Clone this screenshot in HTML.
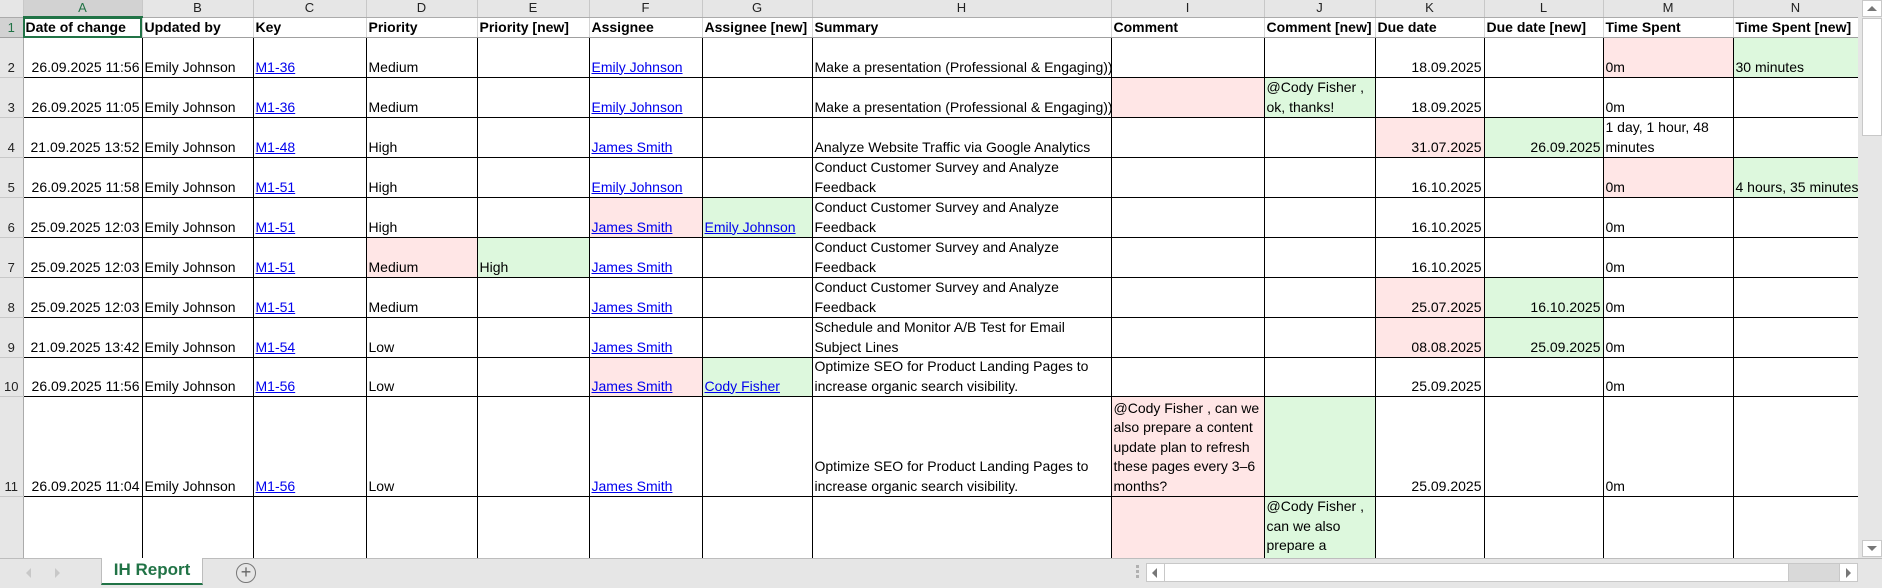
<!DOCTYPE html>
<html><head><meta charset="utf-8"><style>
*{margin:0;padding:0;box-sizing:border-box}
body{width:1882px;height:588px;overflow:hidden;background:#fff;font-family:"Liberation Sans",sans-serif;font-size:14px;color:#000;position:relative}
table{border-collapse:collapse;table-layout:fixed;position:absolute;left:0;top:0;width:1858px}
td{overflow:hidden;vertical-align:bottom;padding:0;border-right:1px solid #000;border-bottom:1px solid #000}
.c{display:flex;flex-direction:column;justify-content:flex-end;overflow:hidden;padding:0 2px;line-height:19.5px;white-space:nowrap;width:100%;max-width:100%}
.c.top{justify-content:flex-start}
tr.h40 .c{height:39px}
tr.h39 .c{height:38px}
tr.h100 .c{height:99px}
tr.h62 .c{height:61px}
tr.ch td{height:17px;background:#e6e6e6;text-align:center;border-right:1px solid #c8c8c8;border-bottom:1px solid #ababab;line-height:16px;padding:0;color:#222;vertical-align:middle;font-size:13px}
tr.ch td.sel{background:#d2d2d2;color:#217346;border-bottom:2px solid #217346}
td.rh{background:#e6e6e6;text-align:center;border-right:1px solid #ababab;border-bottom:1px solid #c8c8c8;color:#222;font-size:13px}
td.rh .c{align-items:center}
td.rhs{background:#d2d2d2;color:#217346;border-right:2px solid #217346}
tr.r1 td{font-weight:bold;border-right:1px solid #d4d4d4;border-bottom:1px solid #a0a0a0}
tr.r1 .c{height:19px;justify-content:center}
tr.r1 td.rh{font-weight:normal}
.r .c{align-items:flex-end}
.p{background:#ffe6e6}
.g{background:#ddf8dd}
a{color:#0000ee;text-decoration:underline}
</style></head><body>
<table>
<colgroup><col style="width:23px"><col style="width:119px"><col style="width:111px"><col style="width:113px"><col style="width:111px"><col style="width:112px"><col style="width:113px"><col style="width:110px"><col style="width:299px"><col style="width:153px"><col style="width:111px"><col style="width:109px"><col style="width:119px"><col style="width:130px"><col style="width:125px"></colgroup>
<tr class="ch"><td></td><td class="sel">A</td><td>B</td><td>C</td><td>D</td><td>E</td><td>F</td><td>G</td><td>H</td><td>I</td><td>J</td><td>K</td><td>L</td><td>M</td><td>N</td></tr>
<tr class="r1"><td class="rh rhs"><div class="c">1</div></td><td style="outline:2px solid #217346;outline-offset:-2px"><div class="c">Date of change</div></td><td><div class="c">Updated by</div></td><td><div class="c">Key</div></td><td><div class="c">Priority</div></td><td><div class="c">Priority [new]</div></td><td><div class="c">Assignee</div></td><td><div class="c">Assignee [new]</div></td><td><div class="c">Summary</div></td><td><div class="c">Comment</div></td><td><div class="c">Comment [new]</div></td><td><div class="c">Due date</div></td><td><div class="c">Due date [new]</div></td><td><div class="c">Time Spent</div></td><td><div class="c">Time Spent [new]</div></td></tr>
<tr class="h40"><td class="rh"><div class="c">2</div></td><td class="r"><div class="c">26.09.2025 11:56</div></td><td><div class="c">Emily Johnson</div></td><td><div class="c"><a>M1-36</a></div></td><td><div class="c">Medium</div></td><td><div class="c"></div></td><td><div class="c"><a>Emily Johnson</a></div></td><td><div class="c"></div></td><td><div class="c">Make a presentation (Professional &amp; Engaging))</div></td><td><div class="c"></div></td><td><div class="c"></div></td><td class="r"><div class="c">18.09.2025</div></td><td><div class="c"></div></td><td class="p"><div class="c">0m</div></td><td class="g"><div class="c">30 minutes</div></td></tr>
<tr class="h40"><td class="rh"><div class="c">3</div></td><td class="r"><div class="c">26.09.2025 11:05</div></td><td><div class="c">Emily Johnson</div></td><td><div class="c"><a>M1-36</a></div></td><td><div class="c">Medium</div></td><td><div class="c"></div></td><td><div class="c"><a>Emily Johnson</a></div></td><td><div class="c"></div></td><td><div class="c">Make a presentation (Professional &amp; Engaging))</div></td><td class="p"><div class="c"></div></td><td class="g"><div class="c">@Cody Fisher ,<br>ok, thanks!</div></td><td class="r"><div class="c">18.09.2025</div></td><td><div class="c"></div></td><td><div class="c">0m</div></td><td><div class="c"></div></td></tr>
<tr class="h40"><td class="rh"><div class="c">4</div></td><td class="r"><div class="c">21.09.2025 13:52</div></td><td><div class="c">Emily Johnson</div></td><td><div class="c"><a>M1-48</a></div></td><td><div class="c">High</div></td><td><div class="c"></div></td><td><div class="c"><a>James Smith</a></div></td><td><div class="c"></div></td><td><div class="c">Analyze Website Traffic via Google Analytics</div></td><td><div class="c"></div></td><td><div class="c"></div></td><td class="r p"><div class="c">31.07.2025</div></td><td class="r g"><div class="c">26.09.2025</div></td><td><div class="c">1 day, 1 hour, 48<br>minutes</div></td><td><div class="c"></div></td></tr>
<tr class="h40"><td class="rh"><div class="c">5</div></td><td class="r"><div class="c">26.09.2025 11:58</div></td><td><div class="c">Emily Johnson</div></td><td><div class="c"><a>M1-51</a></div></td><td><div class="c">High</div></td><td><div class="c"></div></td><td><div class="c"><a>Emily Johnson</a></div></td><td><div class="c"></div></td><td><div class="c">Conduct Customer Survey and Analyze<br>Feedback</div></td><td><div class="c"></div></td><td><div class="c"></div></td><td class="r"><div class="c">16.10.2025</div></td><td><div class="c"></div></td><td class="p"><div class="c">0m</div></td><td class="g"><div class="c">4 hours, 35 minutes</div></td></tr>
<tr class="h40"><td class="rh"><div class="c">6</div></td><td class="r"><div class="c">25.09.2025 12:03</div></td><td><div class="c">Emily Johnson</div></td><td><div class="c"><a>M1-51</a></div></td><td><div class="c">High</div></td><td><div class="c"></div></td><td class="p"><div class="c"><a>James Smith</a></div></td><td class="g"><div class="c"><a>Emily Johnson</a></div></td><td><div class="c">Conduct Customer Survey and Analyze<br>Feedback</div></td><td><div class="c"></div></td><td><div class="c"></div></td><td class="r"><div class="c">16.10.2025</div></td><td><div class="c"></div></td><td><div class="c">0m</div></td><td><div class="c"></div></td></tr>
<tr class="h40"><td class="rh"><div class="c">7</div></td><td class="r"><div class="c">25.09.2025 12:03</div></td><td><div class="c">Emily Johnson</div></td><td><div class="c"><a>M1-51</a></div></td><td class="p"><div class="c">Medium</div></td><td class="g"><div class="c">High</div></td><td><div class="c"><a>James Smith</a></div></td><td><div class="c"></div></td><td><div class="c">Conduct Customer Survey and Analyze<br>Feedback</div></td><td><div class="c"></div></td><td><div class="c"></div></td><td class="r"><div class="c">16.10.2025</div></td><td><div class="c"></div></td><td><div class="c">0m</div></td><td><div class="c"></div></td></tr>
<tr class="h40"><td class="rh"><div class="c">8</div></td><td class="r"><div class="c">25.09.2025 12:03</div></td><td><div class="c">Emily Johnson</div></td><td><div class="c"><a>M1-51</a></div></td><td><div class="c">Medium</div></td><td><div class="c"></div></td><td><div class="c"><a>James Smith</a></div></td><td><div class="c"></div></td><td><div class="c">Conduct Customer Survey and Analyze<br>Feedback</div></td><td><div class="c"></div></td><td><div class="c"></div></td><td class="r p"><div class="c">25.07.2025</div></td><td class="r g"><div class="c">16.10.2025</div></td><td><div class="c">0m</div></td><td><div class="c"></div></td></tr>
<tr class="h40"><td class="rh"><div class="c">9</div></td><td class="r"><div class="c">21.09.2025 13:42</div></td><td><div class="c">Emily Johnson</div></td><td><div class="c"><a>M1-54</a></div></td><td><div class="c">Low</div></td><td><div class="c"></div></td><td><div class="c"><a>James Smith</a></div></td><td><div class="c"></div></td><td><div class="c">Schedule and Monitor A/B Test for Email<br>Subject Lines</div></td><td><div class="c"></div></td><td><div class="c"></div></td><td class="r p"><div class="c">08.08.2025</div></td><td class="r g"><div class="c">25.09.2025</div></td><td><div class="c">0m</div></td><td><div class="c"></div></td></tr>
<tr class="h39"><td class="rh"><div class="c">10</div></td><td class="r"><div class="c">26.09.2025 11:56</div></td><td><div class="c">Emily Johnson</div></td><td><div class="c"><a>M1-56</a></div></td><td><div class="c">Low</div></td><td><div class="c"></div></td><td class="p"><div class="c"><a>James Smith</a></div></td><td class="g"><div class="c"><a>Cody Fisher</a></div></td><td><div class="c">Optimize SEO for Product Landing Pages to<br>increase organic search visibility.</div></td><td><div class="c"></div></td><td><div class="c"></div></td><td class="r"><div class="c">25.09.2025</div></td><td><div class="c"></div></td><td><div class="c">0m</div></td><td><div class="c"></div></td></tr>
<tr class="h100"><td class="rh"><div class="c">11</div></td><td class="r"><div class="c">26.09.2025 11:04</div></td><td><div class="c">Emily Johnson</div></td><td><div class="c"><a>M1-56</a></div></td><td><div class="c">Low</div></td><td><div class="c"></div></td><td><div class="c"><a>James Smith</a></div></td><td><div class="c"></div></td><td><div class="c">Optimize SEO for Product Landing Pages to<br>increase organic search visibility.</div></td><td class="p"><div class="c">@Cody Fisher , can we<br>also prepare a content<br>update plan to refresh<br>these pages every 3–6<br>months?</div></td><td class="g"><div class="c"></div></td><td class="r"><div class="c">25.09.2025</div></td><td><div class="c"></div></td><td><div class="c">0m</div></td><td><div class="c"></div></td></tr>
<tr class="h62"><td class="rh"><div class="c"></div></td><td><div class="c"></div></td><td><div class="c"></div></td><td><div class="c"></div></td><td><div class="c"></div></td><td><div class="c"></div></td><td><div class="c"></div></td><td><div class="c"></div></td><td><div class="c"></div></td><td class="p"><div class="c"></div></td><td class="g"><div class="c top">@Cody Fisher ,<br>can we also<br>prepare a</div></td><td><div class="c"></div></td><td><div class="c"></div></td><td><div class="c"></div></td><td><div class="c"></div></td></tr>
</table>
<div style="position:absolute;left:1858px;top:0;width:24px;height:558px;background:#e6e6e6"></div>
<div style="position:absolute;left:1862px;top:0;width:20px;height:17px;background:#fff;border:1px solid #c8c8c8"></div>
<div style="position:absolute;left:1867px;top:6px;width:0;height:0;border-left:5px solid transparent;border-right:5px solid transparent;border-bottom:5px solid #777"></div>
<div style="position:absolute;left:1862px;top:18px;width:20px;height:118px;background:#fff;border:1px solid #c8c8c8"></div>
<div style="position:absolute;left:1862px;top:540px;width:20px;height:17px;background:#fff;border:1px solid #c8c8c8"></div>
<div style="position:absolute;left:1867px;top:546px;width:0;height:0;border-left:5px solid transparent;border-right:5px solid transparent;border-top:5px solid #777"></div>
<div style="position:absolute;left:0;top:558px;width:1882px;height:30px;background:#e6e6e6;border-top:1px solid #bdbdbd"></div>
<div style="position:absolute;left:26px;top:568px;width:0;height:0;border-top:5px solid transparent;border-bottom:5px solid transparent;border-right:5px solid #c8c8c8"></div>
<div style="position:absolute;left:55px;top:568px;width:0;height:0;border-top:5px solid transparent;border-bottom:5px solid transparent;border-left:5px solid #c8c8c8"></div>
<div style="position:absolute;left:101px;top:558px;width:102px;height:27px;background:#fff;border-left:1px solid #bdbdbd;border-right:1px solid #bdbdbd;border-bottom:2px solid #217346;color:#217346;font-weight:bold;font-size:17px;text-align:center;line-height:24px">IH Report</div>
<div style="position:absolute;left:236px;top:563px;width:20px;height:20px;border:1.5px solid #777;border-radius:50%;color:#666;font-size:18px;line-height:16px;text-align:center">+</div>
<div style="position:absolute;left:1136px;top:565px;width:3px;height:3px;background:#b0b0b0;box-shadow:0 5px 0 #b0b0b0,0 10px 0 #b0b0b0"></div>
<div style="position:absolute;left:1146px;top:563px;width:712px;height:19px;background:#d9d9d9;border:1px solid #c8c8c8"></div>
<div style="position:absolute;left:1146px;top:563px;width:19px;height:19px;background:#fff;border:1px solid #c8c8c8"></div>
<div style="position:absolute;left:1152px;top:568px;width:0;height:0;border-top:5px solid transparent;border-bottom:5px solid transparent;border-right:5px solid #777"></div>
<div style="position:absolute;left:1165px;top:564px;width:624px;height:17px;background:#fff;border-right:1px solid #c8c8c8"></div>
<div style="position:absolute;left:1839px;top:563px;width:19px;height:19px;background:#fff;border:1px solid #c8c8c8"></div>
<div style="position:absolute;left:1846px;top:568px;width:0;height:0;border-top:5px solid transparent;border-bottom:5px solid transparent;border-left:5px solid #777"></div>
</body></html>
